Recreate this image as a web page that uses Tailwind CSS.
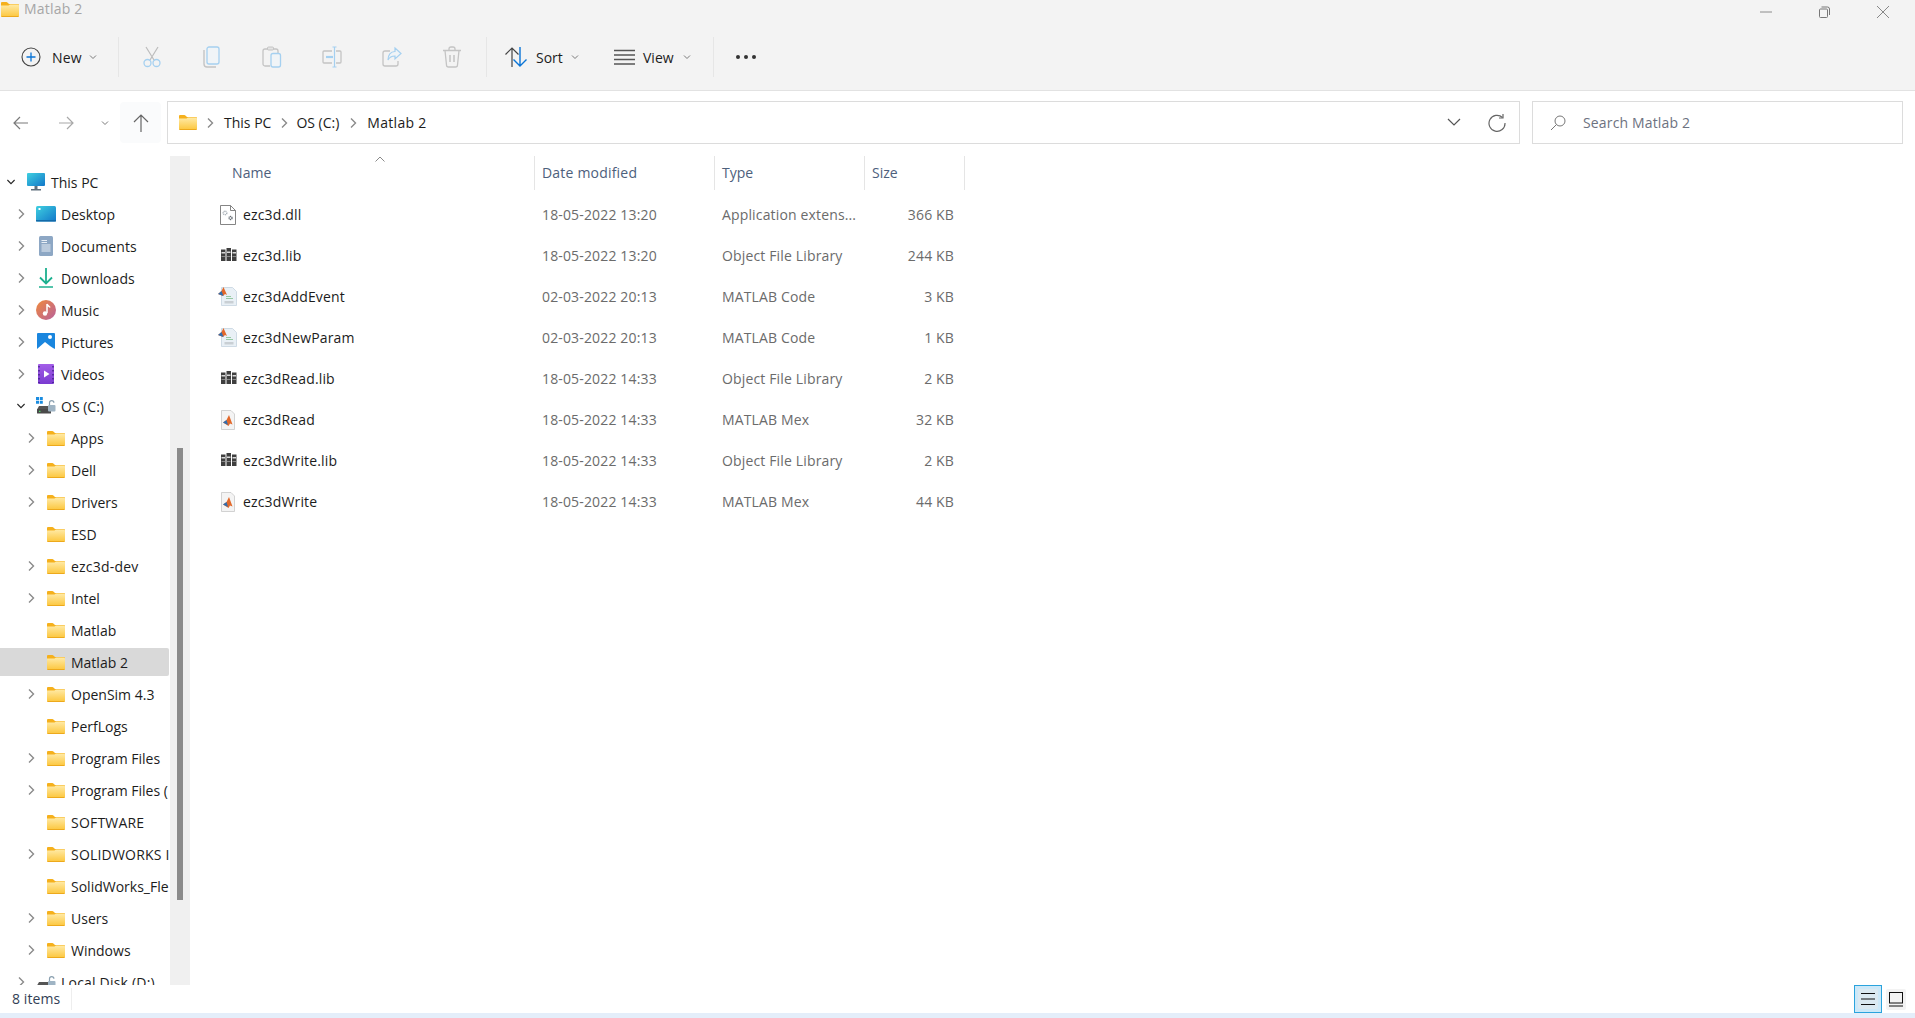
<!DOCTYPE html>
<html lang="en">
<head>
  <meta charset="UTF-8" />
  <title>Matlab 2 - File Explorer</title>
  <script src="https://cdn.jsdelivr.net/npm/@tailwindcss/browser@4"></script>
</head>
<body class="bg-white">
  <!-- shared icons -->
  <svg width="0" height="0" class="absolute">
    <defs>
      <linearGradient id="fold" x1="0" y1="0" x2="0" y2="1"><stop offset="0" stop-color="#ffeaa6"/><stop offset="1" stop-color="#fcc63c"/></linearGradient>
      <linearGradient id="blueg" x1="0" y1="0" x2="1" y2="1"><stop offset="0" stop-color="#3fd0e0"/><stop offset="1" stop-color="#1277c9"/></linearGradient>
      <linearGradient id="musicg" x1="0" y1="0" x2="1" y2="1"><stop offset="0" stop-color="#f08a3c"/><stop offset="1" stop-color="#b8609c"/></linearGradient>
      <linearGradient id="vidg" x1="0" y1="0" x2="0" y2="1"><stop offset="0" stop-color="#a35ee8"/><stop offset="1" stop-color="#7a3bd0"/></linearGradient>
      <symbol id="folder" viewBox="0 0 18 15">
        <path d="M0 1.200C0 .5.5 0 1.200 0h4.200c.4 0 .7.2 1 .5L8 2h8.800c.7 0 1.200.5 1.200 1.200V5H0z" fill="#f5b01c"/>
        <path d="M0 3.500h7.500L9 2.600h7.800c.7 0 1.200.5 1.200 1.200v10c0 .7-.5 1.200-1.200 1.200H1.200C.5 15 0 14.500 0 13.800z" fill="url(#fold)"/>
        <path d="M0 14h18v-.2c0 .7-.5 1.200-1.200 1.200H1.200C.5 15 0 14.500 0 13.800z" fill="#eda91c"/>
      </symbol>
      <symbol id="chev-right" viewBox="0 0 10 12"><path d="M3 1.500 7.500 6 3 10.500" fill="none" stroke="#8a8a8a" stroke-width="1.400"/></symbol>
      <symbol id="chev-down" viewBox="0 0 12 10"><path d="M1.500 2.500 6 7l4.500-4.500" fill="none" stroke="#262626" stroke-width="1.400"/></symbol>
      <symbol id="mini-down" viewBox="0 0 8 6"><path d="M1 1.500 4 4.500l3-3" fill="none" stroke="#7a7a7a" stroke-width="1"/></symbol>
      <symbol id="drive" viewBox="0 0 20 20">
        <path d="M1 13.500 3 10h12v7H1z" fill="#555"/><rect x="1" y="13" width="14" height="4.500" rx=".5" fill="#4a4a4a"/><rect x="3" y="14.800" width="1.500" height="1.200" fill="#4cd964"/>
        <rect x="12" y="9" width="7.500" height="6.500" rx="1" fill="#9fb4c4"/><path d="M13.500 9V6.800a2.200 2.200 0 0 1 4.400 0" fill="none" stroke="#8aa0b0" stroke-width="1.200"/>
      </symbol>
      <symbol id="lib" viewBox="0 0 20 20">
        <g transform="translate(3 2)">
          <path d="M0 1.500h4.500V13H0zM5.500 0H10v13H5.500zM11 1.500h4.500V13H11z" fill="#3f3f3f"/>
          <path d="M.5 4h3.500v1.500H.5zM6 3.500h3.500V5H6zM11.500 4H15v1.500h-3.500z" fill="#d9d9d9"/>
          <path d="M.5 8h3.500v1H.5zM6 8h3.500v1H6zM11.500 8H15v1h-3.500z" fill="#8a8a8a"/>
        </g>
      </symbol>
      <symbol id="mcode" viewBox="0 0 20 20">
        <path d="M3.500 .5h11l4 4V18.500h-15z" fill="#e9f0f6" stroke="#c5d3df" stroke-width=".8"/>
        <path d="M8 9.500h5M8 11.500h7" stroke="#7fc08d" stroke-width=".8"/><rect x="6.500" y="14" width="9" height="2.500" fill="#c9cfd4"/>
        <path d="M0 7 3.500 4 5.500 0 9 8 7 7 5 9z" fill="#e2682a"/><path d="M0 7 3.500 4 5.500 9z" fill="#2f6fb0"/>
      </symbol>
      <symbol id="mex" viewBox="0 0 20 20">
        <path d="M3.500 .5h9.500l3.500 3.500V19.500h-13z" fill="#f4f4f4" stroke="#c8c8c8" stroke-width=".8"/>
        <path d="M5 12.500 8.500 10l2.500-5 3.500 9.500-2.500-1-1.500 2.500z" fill="#e2682a"/><path d="M5 12.500 8.500 10l1.500 5z" fill="#2f6fb0"/>
      </symbol>
    </defs>
  </svg>

  <div class="w-[1915px] h-[1018px] flex flex-col overflow-hidden font-['Open_Sans',sans-serif] text-[14px] text-[#1c1c1c]">

    <!-- title bar + command bar -->
    <div class="h-[91px] shrink-0 bg-[#f3f3f3] border-b border-[#e2e2e2] flex flex-col">
      <div class="h-[24px] flex items-start">
        <svg class="w-[18px] h-[15px] mt-[2px] ml-[1px]"><use href="#folder"/></svg>
        <span class="ml-[5px] leading-[18px] text-[#a6a6a6] tracking-[0.2px]">Matlab 2</span>
        <div class="ml-auto flex items-center h-[24px]">
          <svg class="w-3 h-3" viewBox="0 0 12 12"><path d="M0 6h12" stroke="#8c8c8c"/></svg>
          <svg class="w-3 h-3 ml-[46px]" viewBox="0 0 12 12" fill="none" stroke="#777"><rect x="1.500" y="3" width="8" height="8.500" rx="1"/><path d="M3.500 1h6a2 2 0 0 1 2 2v6"/></svg>
          <svg class="w-[14px] h-[14px] ml-[46px] mr-[25px]" viewBox="0 0 14 14"><path d="M1 1l12 12M13 1 1 13" stroke="#7a7a7a" stroke-width=".9"/></svg>
        </div>
      </div>
      <div class="flex-1 flex items-center">
        <svg class="w-5 h-5 ml-[21px]" viewBox="0 0 20 20"><circle cx="10" cy="10" r="9" fill="none" stroke="#444" stroke-width="1.100"/><path d="M10 5.500v9M5.500 10h9" stroke="#0a74d6" stroke-width="1.300"/></svg>
        <span class="ml-[11px] w-[36px] tracking-[0.2px]">New</span>
        <svg class="w-2 h-[6px] ml-[1px]"><use href="#mini-down"/></svg>
        <div class="w-px h-[40px] bg-[#e6e6e6] ml-[21px]"></div>

        <div class="w-[60px] flex justify-center ml-[3px]">
          <svg class="w-[20px] h-[22px]" viewBox="0 0 20 22" fill="none"><path d="M4 1l8 13M16 1 8 14" stroke="#bcbcbc" stroke-width="1.200"/><circle cx="5.500" cy="17" r="3.500" stroke="#a5d0f0" stroke-width="1.300"/><circle cx="14.500" cy="17" r="3.500" stroke="#a5d0f0" stroke-width="1.300"/></svg>
        </div>
        <div class="w-[60px] flex justify-center">
          <svg class="w-[18px] h-[22px]" viewBox="0 0 18 22" fill="none"><path d="M1 4v14a3 3 0 0 0 3 3h9" stroke="#c4c4c4" stroke-width="1.400"/><rect x="4" y="1" width="12" height="17" rx="2" fill="#f0f4f7" stroke="#a5d0f0" stroke-width="1.300"/></svg>
        </div>
        <div class="w-[60px] flex justify-center">
          <svg class="w-[20px] h-[22px]" viewBox="0 0 20 22" fill="none"><path d="M8 20H3a2 2 0 0 1-2-2V5a2 2 0 0 1 2-2h11a2 2 0 0 1 2 2v3" stroke="#c4c4c4" stroke-width="1.300"/><rect x="5.500" y="1" width="6" height="3" rx="1" fill="#e4e4e4" stroke="#c4c4c4"/><rect x="9" y="7.500" width="9.500" height="13.500" rx="2" fill="#f0f4f7" stroke="#a5d0f0" stroke-width="1.300"/></svg>
        </div>
        <div class="w-[60px] flex justify-center">
          <svg class="w-[20px] h-[22px]" viewBox="0 0 20 22" fill="none"><path d="M10 5H2a1 1 0 0 0-1 1v10a1 1 0 0 0 1 1h8M14 5h4a1 1 0 0 1 1 1v10a1 1 0 0 1-1 1h-4" stroke="#c4c4c4" stroke-width="1.300"/><path d="M4 11h7" stroke="#a5d0f0" stroke-width="2.200"/><path d="M12.500 1v20M10.500 1h4M10.500 21h4" stroke="#a5d0f0" stroke-width="1.200"/></svg>
        </div>
        <div class="w-[60px] flex justify-center">
          <svg class="w-[20px] h-[22px]" viewBox="0 0 20 22" fill="none"><path d="M8 5H3a2 2 0 0 0-2 2v11a2 2 0 0 0 2 2h11a2 2 0 0 0 2-2v-3" stroke="#c4c4c4" stroke-width="1.300"/><path d="M13 2l6 5.500L13 13V10c-3.500 0-5.500 1-7 4 0-5 2.500-8.500 7-8.500z" fill="#f0f4f7" stroke="#a5d0f0" stroke-width="1.200"/></svg>
        </div>
        <div class="w-[60px] flex justify-center">
          <svg class="w-[20px] h-[22px]" viewBox="0 0 20 22" fill="none" stroke="#c4c4c4" stroke-width="1.300"><path d="M1 4.500h18M7 4.500V3a2 2 0 0 1 2-2h2a2 2 0 0 1 2 2v1.500"/><path d="M3 4.500 4.500 19a2 2 0 0 0 2 2h7a2 2 0 0 0 2-2L17 4.500"/><path d="M8 9v7M12 9v7" stroke-width="1.500"/></svg>
        </div>
        <div class="w-px h-[40px] bg-[#e6e6e6] ml-[4px]"></div>

        <svg class="w-[24px] h-[22px] ml-[17px]" viewBox="0 0 24 22" fill="none"><path d="M8 21V2M1.500 8.500 8 2l6.500 6.500" stroke="#444" stroke-width="1.200"/><path d="M16 1v19M9.500 13.500 16 20l6.500-6.500" stroke="#0a74d6" stroke-width="1.400"/></svg>
        <span class="ml-[8px] w-[36px]">Sort</span>
        <svg class="w-2 h-[6px] ml-[-1px]"><use href="#mini-down"/></svg>
        <svg class="w-[21px] h-[16px] ml-[35px]" viewBox="0 0 21 16" fill="none" stroke="#555" stroke-width="1.300"><path d="M0 1.500h21M0 6h21M0 10.500h21M0 15h21"/></svg>
        <span class="ml-[8px] w-[40px]">View</span>
        <svg class="w-2 h-[6px]"><use href="#mini-down"/></svg>
        <div class="w-px h-[40px] bg-[#e6e6e6] ml-[22px]"></div>
        <div class="flex gap-[4px] ml-[22px]">
          <span class="w-[4px] h-[4px] rounded-full bg-[#333]"></span>
          <span class="w-[4px] h-[4px] rounded-full bg-[#333]"></span>
          <span class="w-[4px] h-[4px] rounded-full bg-[#333]"></span>
        </div>
      </div>
    </div>

    <!-- navigation row -->
    <div class="h-[65px] shrink-0 flex items-start pt-[10px]">
      <div class="w-[167px] h-[43px] flex items-center shrink-0">
        <svg class="w-[16px] h-[14px] ml-[13px]" viewBox="0 0 16 14" fill="none" stroke="#7a7a7a" stroke-width="1.200"><path d="M15 7H1M7 1 1 7l6 6"/></svg>
        <svg class="w-[16px] h-[14px] ml-[29px]" viewBox="0 0 16 14" fill="none" stroke="#a8a8a8" stroke-width="1.200"><path d="M1 7h14M9 1l6 6-6 6"/></svg>
        <svg class="w-2 h-[6px] ml-[27px]"><use href="#mini-down"/></svg>
        <div class="w-[41px] h-[41px] ml-[11px] bg-[#fafbfc] rounded flex items-center justify-center">
          <svg class="w-[16px] h-[18px]" viewBox="0 0 16 18" fill="none" stroke="#666" stroke-width="1.200"><path d="M8 18V1M1 8l7-7 7 7"/></svg>
        </div>
      </div>
      <div class="w-[1353px] h-[43px] border border-[#dcdcdc] flex items-center shrink-0">
        <svg class="w-[18px] h-[15px] ml-[11px]"><use href="#folder"/></svg>
        <svg class="w-[10px] h-3 ml-[8px]"><use href="#chev-right"/></svg>
        <span class="ml-[9px]">This PC</span>
        <svg class="w-[10px] h-3 ml-[8px]"><use href="#chev-right"/></svg>
        <span class="ml-[7px]">OS (C:)</span>
        <svg class="w-[10px] h-3 ml-[9px]"><use href="#chev-right"/></svg>
        <span class="ml-[9px] tracking-[0.3px]">Matlab 2</span>
        <svg class="w-[14px] h-[9px] ml-auto" viewBox="0 0 14 9" fill="none" stroke="#555" stroke-width="1.200"><path d="M1 1l6 6 6-6"/></svg>
        <svg class="w-[18px] h-[18px] ml-[27px] mr-[13px]" viewBox="0 0 18 18" fill="none" stroke="#666" stroke-width="1.200"><path d="M14.500 3.500A8 8 0 1 0 17 9"/><path d="M15 0v4h-4" /></svg>
      </div>
      <div class="w-[371px] h-[43px] ml-[12px] border border-[#dcdcdc] flex items-center shrink-0 text-[#6d7280]">
        <svg class="w-[16px] h-[16px] ml-[17px]" viewBox="0 0 16 16" fill="none" stroke="#777" stroke-width="1"><circle cx="10" cy="6" r="5"/><path d="M6.500 9.500 1 15"/></svg>
        <span class="ml-[17px] tracking-[0.15px]">Search Matlab 2</span>
      </div>
    </div>

    <!-- body -->
    <div class="flex-1 flex min-h-0">
      <!-- tree -->
      <div class="w-[170px] shrink-0 overflow-hidden pt-[12px] flex flex-col gap-[4px]">
        <div class="h-[28px] shrink-0 flex items-center pl-[6px]">
          <svg class="w-[10px] h-[8px]"><use href="#chev-down"/></svg>
          <svg class="w-5 h-5 ml-[10px]" viewBox="0 0 20 20"><rect x="1" y="1" width="18" height="13" rx="1" fill="url(#blueg)"/><rect x="8.500" y="14" width="3" height="3" fill="#5f6f7c"/><rect x="5" y="17" width="10" height="1.500" fill="#5f6f7c"/></svg>
          <span class="ml-[5px] whitespace-nowrap">This PC</span>
        </div>
        <div class="h-[28px] shrink-0 flex items-center pl-[16px]">
          <svg class="w-[10px] h-3"><use href="#chev-right"/></svg>
          <svg class="w-5 h-5 ml-[10px]" viewBox="0 0 20 20"><rect x="0" y="2" width="20" height="15.500" rx="1.500" fill="url(#blueg)"/><rect x="2.500" y="4" width="2" height="2" fill="#fff"/><rect x="0" y="16" width="20" height="1.500" fill="#136aa8"/></svg>
          <span class="ml-[5px] whitespace-nowrap">Desktop</span>
        </div>
        <div class="h-[28px] shrink-0 flex items-center pl-[16px]">
          <svg class="w-[10px] h-3"><use href="#chev-right"/></svg>
          <svg class="w-5 h-5 ml-[10px]" viewBox="0 0 20 20"><rect x="3" y="0" width="14" height="20" rx="1.500" fill="#8da7c4"/><path d="M5.500 4.500H11M5.500 6.500H11M5.500 9h9M5.500 11h9M5.500 13h9M5.500 15h9" stroke="#e8eef5" stroke-width="1"/></svg>
          <span class="ml-[5px] whitespace-nowrap tracking-[0.1px]">Documents</span>
        </div>
        <div class="h-[28px] shrink-0 flex items-center pl-[16px]">
          <svg class="w-[10px] h-3"><use href="#chev-right"/></svg>
          <svg class="w-5 h-5 ml-[10px]" viewBox="0 0 20 20" fill="none" stroke="#1cb08f" stroke-width="1.800"><path d="M10 0v15M4 9.500l6 6 6-6"/><path d="M3 19h14" stroke-width="1.500"/></svg>
          <span class="ml-[5px] whitespace-nowrap tracking-[0.1px]">Downloads</span>
        </div>
        <div class="h-[28px] shrink-0 flex items-center pl-[16px]">
          <svg class="w-[10px] h-3"><use href="#chev-right"/></svg>
          <svg class="w-5 h-5 ml-[10px]" viewBox="0 0 20 20"><circle cx="10" cy="10" r="10" fill="url(#musicg)"/><path d="M11 4v9M11 4c.5 2 2.500 2 3 3.500" fill="none" stroke="#fff" stroke-width="1.500"/><circle cx="9" cy="13.500" r="2.200" fill="#fff"/></svg>
          <span class="ml-[5px] whitespace-nowrap">Music</span>
        </div>
        <div class="h-[28px] shrink-0 flex items-center pl-[16px]">
          <svg class="w-[10px] h-3"><use href="#chev-right"/></svg>
          <svg class="w-5 h-5 ml-[10px]" viewBox="0 0 20 20"><rect x="1" y="1" width="18" height="18" rx="1" fill="#1a86de"/><path d="M1 19v-2l8-7 5 4 3 2 2 1v2z" fill="#fff"/><circle cx="14" cy="5" r="2" fill="#fff"/></svg>
          <span class="ml-[5px] whitespace-nowrap">Pictures</span>
        </div>
        <div class="h-[28px] shrink-0 flex items-center pl-[16px]">
          <svg class="w-[10px] h-3"><use href="#chev-right"/></svg>
          <svg class="w-5 h-5 ml-[10px]" viewBox="0 0 20 20"><rect x="2" y="0" width="16" height="20" rx="1" fill="url(#vidg)"/><path d="M8 6.500v7l5.500-3.500z" fill="#fff"/><path d="M3 2v1.500M3 6v1.500M3 10v1.500M3 14v1.500M3 18v1M17 2v1.500M17 6v1.500M17 10v1.500M17 14v1.500M17 18v1" stroke="#3a1a80" stroke-width="1.300"/></svg>
          <span class="ml-[5px] whitespace-nowrap">Videos</span>
        </div>
        <div class="h-[28px] shrink-0 flex items-center pl-[16px]">
          <svg class="w-[10px] h-[8px]"><use href="#chev-down"/></svg>
          <svg class="w-5 h-5 ml-[10px]" viewBox="0 0 20 20"><use href="#drive"/><path d="M0 1h3v3H0zM3.800 1h3v3h-3zM0 4.800h3v3H0zM3.800 4.800h3v3h-3z" fill="#1a8ce0"/></svg>
          <span class="ml-[5px] whitespace-nowrap">OS (C:)</span>
        </div>
        <div class="h-[28px] shrink-0 flex items-center pl-[26px]"><svg class="w-[10px] h-3"><use href="#chev-right"/></svg><svg class="w-[18px] h-[15px] ml-[11px] mr-[1px]"><use href="#folder"/></svg><span class="ml-[5px] whitespace-nowrap">Apps</span></div>
        <div class="h-[28px] shrink-0 flex items-center pl-[26px]"><svg class="w-[10px] h-3"><use href="#chev-right"/></svg><svg class="w-[18px] h-[15px] ml-[11px] mr-[1px]"><use href="#folder"/></svg><span class="ml-[5px] whitespace-nowrap">Dell</span></div>
        <div class="h-[28px] shrink-0 flex items-center pl-[26px]"><svg class="w-[10px] h-3"><use href="#chev-right"/></svg><svg class="w-[18px] h-[15px] ml-[11px] mr-[1px]"><use href="#folder"/></svg><span class="ml-[5px] whitespace-nowrap">Drivers</span></div>
        <div class="h-[28px] shrink-0 flex items-center pl-[47px]"><svg class="w-[18px] h-[15px] mr-[1px]"><use href="#folder"/></svg><span class="ml-[5px] whitespace-nowrap">ESD</span></div>
        <div class="h-[28px] shrink-0 flex items-center pl-[26px]"><svg class="w-[10px] h-3"><use href="#chev-right"/></svg><svg class="w-[18px] h-[15px] ml-[11px] mr-[1px]"><use href="#folder"/></svg><span class="ml-[5px] whitespace-nowrap tracking-[0.2px]">ezc3d-dev</span></div>
        <div class="h-[28px] shrink-0 flex items-center pl-[26px]"><svg class="w-[10px] h-3"><use href="#chev-right"/></svg><svg class="w-[18px] h-[15px] ml-[11px] mr-[1px]"><use href="#folder"/></svg><span class="ml-[5px] whitespace-nowrap">Intel</span></div>
        <div class="h-[28px] shrink-0 flex items-center pl-[47px]"><svg class="w-[18px] h-[15px] mr-[1px]"><use href="#folder"/></svg><span class="ml-[5px] whitespace-nowrap">Matlab</span></div>
        <div class="h-[28px] shrink-0 flex items-center pl-[47px] w-[169px] bg-[#d9d9d9] rounded-r-[2px]"><svg class="w-[18px] h-[15px] mr-[1px]"><use href="#folder"/></svg><span class="ml-[5px] whitespace-nowrap">Matlab 2</span></div>
        <div class="h-[28px] shrink-0 flex items-center pl-[26px]"><svg class="w-[10px] h-3"><use href="#chev-right"/></svg><svg class="w-[18px] h-[15px] ml-[11px] mr-[1px]"><use href="#folder"/></svg><span class="ml-[5px] whitespace-nowrap">OpenSim 4.3</span></div>
        <div class="h-[28px] shrink-0 flex items-center pl-[47px]"><svg class="w-[18px] h-[15px] mr-[1px]"><use href="#folder"/></svg><span class="ml-[5px] whitespace-nowrap">PerfLogs</span></div>
        <div class="h-[28px] shrink-0 flex items-center pl-[26px]"><svg class="w-[10px] h-3"><use href="#chev-right"/></svg><svg class="w-[18px] h-[15px] ml-[11px] mr-[1px]"><use href="#folder"/></svg><span class="ml-[5px] whitespace-nowrap">Program Files</span></div>
        <div class="h-[28px] shrink-0 flex items-center pl-[26px]"><svg class="w-[10px] h-3"><use href="#chev-right"/></svg><svg class="w-[18px] h-[15px] ml-[11px] mr-[1px]"><use href="#folder"/></svg><span class="ml-[5px] whitespace-nowrap">Program Files (</span></div>
        <div class="h-[28px] shrink-0 flex items-center pl-[47px]"><svg class="w-[18px] h-[15px] mr-[1px]"><use href="#folder"/></svg><span class="ml-[5px] whitespace-nowrap tracking-[0.2px]">SOFTWARE</span></div>
        <div class="h-[28px] shrink-0 flex items-center pl-[26px]"><svg class="w-[10px] h-3"><use href="#chev-right"/></svg><svg class="w-[18px] h-[15px] ml-[11px] mr-[1px]"><use href="#folder"/></svg><span class="ml-[5px] whitespace-nowrap tracking-[0.2px]">SOLIDWORKS I</span></div>
        <div class="h-[28px] shrink-0 flex items-center pl-[47px]"><svg class="w-[18px] h-[15px] mr-[1px]"><use href="#folder"/></svg><span class="ml-[5px] whitespace-nowrap">SolidWorks_Fle</span></div>
        <div class="h-[28px] shrink-0 flex items-center pl-[26px]"><svg class="w-[10px] h-3"><use href="#chev-right"/></svg><svg class="w-[18px] h-[15px] ml-[11px] mr-[1px]"><use href="#folder"/></svg><span class="ml-[5px] whitespace-nowrap">Users</span></div>
        <div class="h-[28px] shrink-0 flex items-center pl-[26px]"><svg class="w-[10px] h-3"><use href="#chev-right"/></svg><svg class="w-[18px] h-[15px] ml-[11px] mr-[1px]"><use href="#folder"/></svg><span class="ml-[5px] whitespace-nowrap">Windows</span></div>
        <div class="h-[28px] shrink-0 flex items-center pl-[16px]">
          <svg class="w-[10px] h-3"><use href="#chev-right"/></svg>
          <svg class="w-5 h-5 ml-[10px]"><use href="#drive"/></svg>
          <span class="ml-[5px] whitespace-nowrap tracking-[0.2px]">Local Disk (D:)</span>
        </div>
      </div>

      <!-- tree scrollbar -->
      <div class="w-[20px] shrink-0 bg-[#f0f0f0]">
        <div class="w-[6px] h-[452px] mt-[292px] mx-auto bg-[#8b8b8b]"></div>
      </div>

      <!-- file list -->
      <div class="flex-1 pl-[28px] relative">
        <svg class="absolute left-[185px] top-0 w-[10px] h-[6px]" viewBox="0 0 10 6" fill="none" stroke="#8a8a8a"><path d="M.5 5.500 5 1l4.500 4.500"/></svg>
        <div class="grid grid-cols-[316px_180px_150px_100px_1fr] h-[32px] text-[#4d607c] leading-[34px]">
          <div class="pl-[14px] tracking-[0.1px]">Name</div>
          <div class="border-l border-[#e5e5e5] pl-[7px] tracking-[0.2px]">Date modified</div>
          <div class="border-l border-[#e5e5e5] pl-[7px]">Type</div>
          <div class="border-l border-[#e5e5e5] pl-[7px]">Size</div>
          <div class="border-l border-[#e5e5e5]"></div>
        </div>
        <div class="mt-[6px] grid grid-cols-[316px_180px_150px_100px_1fr] auto-rows-[41px] items-center text-[#6b6b6b] tracking-[0.15px]">
          <div class="flex items-center text-[#1c1c1c]">
            <svg class="w-5 h-5" viewBox="0 0 20 20"><path d="M2.500.5h10l5 5v14h-15z" fill="#fff" stroke="#777" stroke-width=".9"/><path d="M12.500.5v5h5" fill="none" stroke="#777" stroke-width=".9"/><circle cx="7" cy="8" r="1.800" fill="none" stroke="#a9b1b8" stroke-width="1.400" stroke-dasharray="1 .6"/><circle cx="12.500" cy="13" r="1.500" fill="none" stroke="#59626a" stroke-width="1.300" stroke-dasharray="1 .5"/></svg>
            <span class="ml-[5px]">ezc3d.dll</span>
          </div>
          <div class="pl-[8px]">18-05-2022 13:20</div><div class="pl-[8px] whitespace-nowrap">Application extens...</div><div class="text-right pr-[10px]">366 KB</div><div></div>

          <div class="flex items-center text-[#1c1c1c]"><svg class="w-5 h-5"><use href="#lib"/></svg><span class="ml-[5px]">ezc3d.lib</span></div>
          <div class="pl-[8px]">18-05-2022 13:20</div><div class="pl-[8px]">Object File Library</div><div class="text-right pr-[10px]">244 KB</div><div></div>

          <div class="flex items-center text-[#1c1c1c]"><svg class="w-5 h-5"><use href="#mcode"/></svg><span class="ml-[5px]">ezc3dAddEvent</span></div>
          <div class="pl-[8px]">02-03-2022 20:13</div><div class="pl-[8px]">MATLAB Code</div><div class="text-right pr-[10px]">3 KB</div><div></div>

          <div class="flex items-center text-[#1c1c1c]"><svg class="w-5 h-5"><use href="#mcode"/></svg><span class="ml-[5px]">ezc3dNewParam</span></div>
          <div class="pl-[8px]">02-03-2022 20:13</div><div class="pl-[8px]">MATLAB Code</div><div class="text-right pr-[10px]">1 KB</div><div></div>

          <div class="flex items-center text-[#1c1c1c]"><svg class="w-5 h-5"><use href="#lib"/></svg><span class="ml-[5px]">ezc3dRead.lib</span></div>
          <div class="pl-[8px]">18-05-2022 14:33</div><div class="pl-[8px]">Object File Library</div><div class="text-right pr-[10px]">2 KB</div><div></div>

          <div class="flex items-center text-[#1c1c1c]"><svg class="w-5 h-5"><use href="#mex"/></svg><span class="ml-[5px]">ezc3dRead</span></div>
          <div class="pl-[8px]">18-05-2022 14:33</div><div class="pl-[8px]">MATLAB Mex</div><div class="text-right pr-[10px]">32 KB</div><div></div>

          <div class="flex items-center text-[#1c1c1c]"><svg class="w-5 h-5"><use href="#lib"/></svg><span class="ml-[5px]">ezc3dWrite.lib</span></div>
          <div class="pl-[8px]">18-05-2022 14:33</div><div class="pl-[8px]">Object File Library</div><div class="text-right pr-[10px]">2 KB</div><div></div>

          <div class="flex items-center text-[#1c1c1c]"><svg class="w-5 h-5"><use href="#mex"/></svg><span class="ml-[5px]">ezc3dWrite</span></div>
          <div class="pl-[8px]">18-05-2022 14:33</div><div class="pl-[8px]">MATLAB Mex</div><div class="text-right pr-[10px]">44 KB</div><div></div>
        </div>
      </div>
    </div>

    <!-- status bar -->
    <div class="h-[28px] shrink-0 flex items-center bg-white">
      <span class="ml-[12px] w-[60px] text-[#333f55] border-r border-[#eeeeee] leading-[22px] tracking-[0.1px]">8 items</span>
      <div class="ml-auto w-[28px] h-[28px] bg-[#cce8f8] border border-[#2aa3dd] flex items-center justify-center">
        <div class="w-[20px] h-[20px] bg-[#dbe9f1] rounded-[2px] flex items-center justify-center">
          <svg class="w-[14px] h-[14px]" viewBox="0 0 14 14" stroke="#111"><path d="M0 1.500h14M0 7h14M0 12.500h14"/></svg>
        </div>
      </div>
      <div class="w-[20px] h-[21px] ml-[4px] mr-[9px] bg-[#f3f3f3] rounded-[2px] flex items-center justify-center">
        <svg class="w-[14px] h-[15px]" viewBox="0 0 14 15" fill="none" stroke="#111"><rect x=".5" y=".5" width="13" height="10.500"/><path d="M0 14h14"/></svg>
      </div>
    </div>
    <div class="h-[5px] shrink-0 bg-[#e4eefa]"></div>
  </div>
</body>
</html>
